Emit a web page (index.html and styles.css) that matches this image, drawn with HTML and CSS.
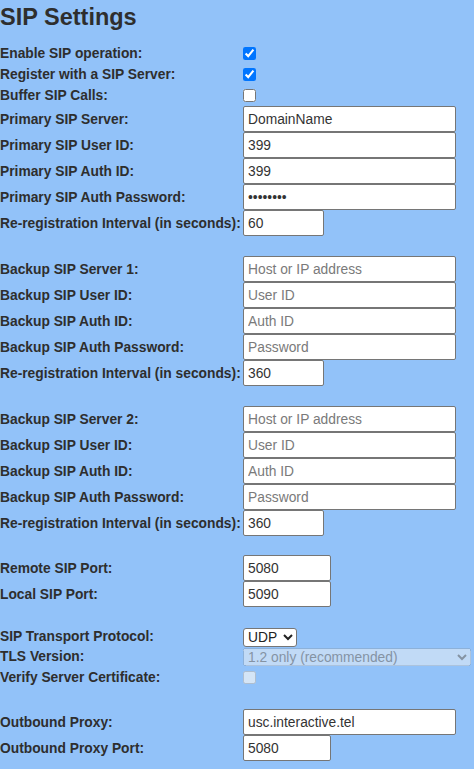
FILE: index.html
```html
<!DOCTYPE html>
<html>
<head>
<meta charset="utf-8">
<title>SIP Settings</title>
<link rel="stylesheet" href="styles.css">
</head>
<body>
<h1 class="title">SIP Settings</h1>
<table class="form">
  <tr class="r-cb"><td class="lbl">Enable SIP operation:</td><td><input type="checkbox" class="cb" checked></td></tr>
  <tr class="r-cb"><td class="lbl">Register with a SIP Server:</td><td><input type="checkbox" class="cb" checked></td></tr>
  <tr class="r-cb"><td class="lbl">Buffer SIP Calls:</td><td><input type="checkbox" class="cb"></td></tr>
  <tr class="r-in"><td class="lbl">Primary SIP Server:</td><td><input type="text" class="txt wide" value="DomainName"></td></tr>
  <tr class="r-in"><td class="lbl">Primary SIP User ID:</td><td><input type="text" class="txt wide" value="399"></td></tr>
  <tr class="r-in"><td class="lbl">Primary SIP Auth ID:</td><td><input type="text" class="txt wide" value="399"></td></tr>
  <tr class="r-in"><td class="lbl">Primary SIP Auth Password:</td><td><input type="password" class="txt wide" value="secret12"></td></tr>
  <tr class="r-in"><td class="lbl">Re-registration Interval (in seconds):</td><td><input type="text" class="txt short" value="60"></td></tr>
  <tr class="r-gap"><td colspan="2"></td></tr>
  <tr class="r-in"><td class="lbl">Backup SIP Server 1:</td><td><input type="text" class="txt wide" placeholder="Host or IP address"></td></tr>
  <tr class="r-in"><td class="lbl">Backup SIP User ID:</td><td><input type="text" class="txt wide" placeholder="User ID"></td></tr>
  <tr class="r-in"><td class="lbl">Backup SIP Auth ID:</td><td><input type="text" class="txt wide" placeholder="Auth ID"></td></tr>
  <tr class="r-in"><td class="lbl">Backup SIP Auth Password:</td><td><input type="password" class="txt wide" placeholder="Password"></td></tr>
  <tr class="r-in"><td class="lbl">Re-registration Interval (in seconds):</td><td><input type="text" class="txt short" value="360"></td></tr>
  <tr class="r-gap"><td colspan="2"></td></tr>
  <tr class="r-in"><td class="lbl">Backup SIP Server 2:</td><td><input type="text" class="txt wide" placeholder="Host or IP address"></td></tr>
  <tr class="r-in"><td class="lbl">Backup SIP User ID:</td><td><input type="text" class="txt wide" placeholder="User ID"></td></tr>
  <tr class="r-in"><td class="lbl">Backup SIP Auth ID:</td><td><input type="text" class="txt wide" placeholder="Auth ID"></td></tr>
  <tr class="r-in"><td class="lbl">Backup SIP Auth Password:</td><td><input type="password" class="txt wide" placeholder="Password"></td></tr>
  <tr class="r-in"><td class="lbl">Re-registration Interval (in seconds):</td><td><input type="text" class="txt short" value="360"></td></tr>
  <tr class="r-gap2"><td colspan="2"></td></tr>
  <tr class="r-in"><td class="lbl">Remote SIP Port:</td><td><input type="text" class="txt port" value="5080"></td></tr>
  <tr class="r-in"><td class="lbl">Local SIP Port:</td><td><input type="text" class="txt port" value="5090"></td></tr>
  <tr class="r-gap"><td colspan="2"></td></tr>
  <tr class="r-sel"><td class="lbl">SIP Transport Protocol:</td><td><select class="sel proto"><option>UDP</option><option>TCP</option><option>TLS</option></select></td></tr>
  <tr class="r-sel"><td class="lbl">TLS Version:</td><td><select class="sel tls" disabled><option>1.2 only (recommended)</option></select></td></tr>
  <tr class="r-cb"><td class="lbl">Verify Server Certificate:</td><td><input type="checkbox" class="cb" disabled></td></tr>
  <tr class="r-gap3"><td colspan="2"></td></tr>
  <tr class="r-in"><td class="lbl">Outbound Proxy:</td><td><input type="text" class="txt wide" value="usc.interactive.tel"></td></tr>
  <tr class="r-in"><td class="lbl">Outbound Proxy Port:</td><td><input type="text" class="txt port" value="5080"></td></tr>
</table>
</body>
</html>
```

FILE: styles.css
```css
html, body {
  margin: 0;
  padding: 0;
  background: #92c2f9;
}
body {
  font-family: "Liberation Sans", Arial, sans-serif;
  color: #2e2e2e;
  overflow: hidden;
}
.title {
  margin: 0 0 12px 0;
  padding-top: 4px;
  font-size: 23.5px;
  line-height: 27px;
  font-weight: bold;
  color: #2e2e2e;
}
.form {
  border-collapse: collapse;
  border-spacing: 0;
}
.form td {
  padding: 0;
  vertical-align: middle;
}
.lbl {
  width: 243px;
  font-size: 13.8px;
  font-weight: bold;
  white-space: nowrap;
  line-height: 16px;
}
.form .r-in .lbl {
  padding-top: 2px;
}
.r-cb { height: 21px; }
.r-in { height: 26px; }
.r-sel { height: 20px; }
.r-gap { height: 20px; }
.r-gap2 { height: 19px; }
.r-gap3 { height: 21px; }
.cb {
  display: block;
  margin: 0;
  width: 13px;
  height: 13px;
}
.txt {
  display: block;
  box-sizing: border-box;
  height: 26px;
  margin: 0;
  padding: 0 4px;
  border: 1px solid #767676;
  border-radius: 2px;
  background: #fff;
  font-family: "Liberation Sans", Arial, sans-serif;
  font-size: 13.8px;
  color: #333;
}
.txt::placeholder { color: #7a7a7a; }
.wide { width: 213px; }
.short { width: 81px; }
.port { width: 88px; }
.sel {
  display: block;
  box-sizing: border-box;
  margin: 0;
  height: 19px;
  font-family: "Liberation Sans", Arial, sans-serif;
  font-size: 13.8px;
}
.proto {
  width: 54px;
  color: #222;
  background: #fff;
  border: 1px solid #767676;
  border-radius: 3px;
}
.tls {
  width: 228px;
  height: 18px;
}
```
